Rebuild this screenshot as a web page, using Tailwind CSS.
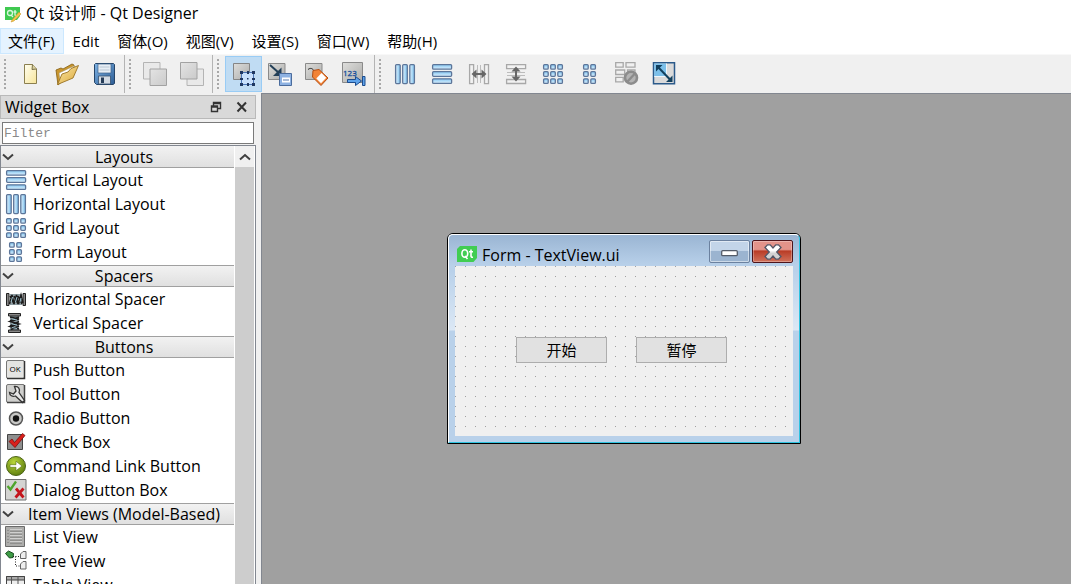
<!DOCTYPE html>
<html lang="zh-CN">
<head>
<meta charset="utf-8">
<title>Qt 设计师 - Qt Designer</title>
<script src="https://cdn.jsdelivr.net/npm/@tailwindcss/browser@4"></script>
</head>
<body class="flex h-screen flex-col overflow-hidden bg-[#f0f0f0] font-['Open_Sans','Noto_Sans_CJK_SC',sans-serif] text-base leading-6 text-black">

<svg class="absolute h-0 w-0" aria-hidden="true">
  <defs>
    <linearGradient id="blue" x1="0" y1="0" x2="0" y2="1"><stop offset="0" stop-color="#85c8f3"/><stop offset="1" stop-color="#dceffc"/></linearGradient>
    <linearGradient id="blueH" x1="0" y1="0" x2="1" y2="0"><stop offset="0" stop-color="#dceffc"/><stop offset="1" stop-color="#80c4f0"/></linearGradient>
    <linearGradient id="gray" x1="0" y1="0" x2="1" y2="1"><stop offset="0" stop-color="#dededc"/><stop offset="1" stop-color="#acacaa"/></linearGradient>
    <linearGradient id="pale" x1="0" y1="0" x2="1" y2="1"><stop offset="0" stop-color="#e4e4e4"/><stop offset="1" stop-color="#cacaca"/></linearGradient>
    <linearGradient id="paper" x1="0" y1="0" x2="1" y2="1"><stop offset="0" stop-color="#fffef0"/><stop offset="1" stop-color="#f7e59a"/></linearGradient>
    <linearGradient id="gold" x1="0" y1="0" x2="1" y2="1"><stop offset="0" stop-color="#fbe6a4"/><stop offset="1" stop-color="#dba93c"/></linearGradient>
    <linearGradient id="floppy" x1="0" y1="0" x2="1" y2="1"><stop offset="0" stop-color="#7fb4e6"/><stop offset="1" stop-color="#2c5c94"/></linearGradient>
    <radialGradient id="green" cx=".4" cy=".3" r=".8"><stop offset="0" stop-color="#b9d63a"/><stop offset="1" stop-color="#55750b"/></radialGradient>
    <linearGradient id="cross" x1="0" y1="0" x2="0" y2="1"><stop offset=".4" stop-color="#fff"/><stop offset=".6" stop-color="#d2d2d2"/></linearGradient>
  </defs>
  <symbol id="i-hlayout" viewBox="0 0 24 24"><g fill="url(#blueH)" stroke="#5c7599" stroke-width="1.3"><rect x="2.6" y="2.6" width="4.6" height="19" rx="1"/><rect x="9.7" y="2.6" width="4.6" height="19" rx="1"/><rect x="16.8" y="2.6" width="4.6" height="19" rx="1"/></g></symbol>
  <symbol id="i-vlayout" viewBox="0 0 24 24"><g fill="url(#blue)" stroke="#5c7599" stroke-width="1.3"><rect x="2.6" y="2.6" width="19" height="4.6" rx="1"/><rect x="2.6" y="9.7" width="19" height="4.6" rx="1"/><rect x="2.6" y="16.8" width="19" height="4.6" rx="1"/></g></symbol>
  <symbol id="i-grid" viewBox="0 0 24 24"><g fill="url(#blue)" stroke="#5c7599" stroke-width="1.3"><rect x="2.6" y="2.6" width="4.6" height="4.6" rx="1"/><rect x="9.7" y="2.6" width="4.6" height="4.6" rx="1"/><rect x="16.8" y="2.6" width="4.6" height="4.6" rx="1"/><rect x="2.6" y="9.7" width="4.6" height="4.6" rx="1"/><rect x="9.7" y="9.7" width="4.6" height="4.6" rx="1"/><rect x="16.8" y="9.7" width="4.6" height="4.6" rx="1"/><rect x="2.6" y="16.8" width="4.6" height="4.6" rx="1"/><rect x="9.7" y="16.8" width="4.6" height="4.6" rx="1"/><rect x="16.8" y="16.8" width="4.6" height="4.6" rx="1"/></g></symbol>
  <symbol id="i-form" viewBox="0 0 24 24"><g fill="url(#blue)" stroke="#5c7599" stroke-width="1.3"><rect x="5.6" y="2.6" width="4.6" height="4.6" rx="1"/><rect x="12.8" y="2.6" width="4.6" height="4.6" rx="1"/><rect x="5.6" y="9.7" width="4.6" height="4.6" rx="1"/><rect x="12.8" y="9.7" width="4.6" height="4.6" rx="1"/><rect x="5.6" y="16.8" width="4.6" height="4.6" rx="1"/><rect x="12.8" y="16.8" width="4.6" height="4.6" rx="1"/></g></symbol>
  <symbol id="i-chevron" viewBox="0 0 12 8"><path d="M1 1.5 6 6 11 1.5" fill="none" stroke="#404040" stroke-width="2"/></symbol>
</svg>

<header class="flex h-7 shrink-0 items-center gap-1 bg-white pl-1">
  <svg class="h-[18px] w-[18px]" viewBox="0 0 18 18"><path d="M1 2h15v9l-3 4H1z" fill="#3fc950"/><circle cx="6" cy="8" r="2.5" fill="none" stroke="#d8f6dc" stroke-width="1.3"/><path d="M7 10l2 2M11 5v5l1 1M9.5 7h3" fill="none" stroke="#d8f6dc" stroke-width="1.3"/><path d="m8 15 7-8 2 2-7 7-3 1z" fill="#f2c44c" stroke="#c49224" stroke-width=".5"/></svg>
  <h1 class="pb-[2px] leading-6">Qt 设计师 - Qt Designer</h1>
</header>

<nav class="flex h-[26px] shrink-0 bg-white text-[15px]" aria-label="菜单">
  <button class="border border-[#cce8ff] bg-[#e5f3ff] pr-2 pl-[7px] leading-6">文件(F)</button>
  <button class="px-[9px]">Edit</button>
  <button class="px-[9px]">窗体(O)</button>
  <button class="px-[9px]">视图(V)</button>
  <button class="px-[9px]">设置(S)</button>
  <button class="px-[9px]">窗口(W)</button>
  <button class="px-[9px]">帮助(H)</button>
</nav>

<div class="flex h-[39px] shrink-0 border-t border-[#f8f8f8]" role="toolbar" aria-label="工具栏">
  <div class="flex items-center border-r border-[#b4b4b4]">
    <div class="mx-1 h-[30px] w-1 bg-[radial-gradient(circle_at_1px_1px,#a8a8a8_1px,transparent_1px)] bg-size-[4px_4px]"></div>
    <button aria-label="新建" class="flex h-9 w-[37px] items-center pl-[6px]"><svg class="h-6 w-6" viewBox="0 0 24 24"><path d="M6.500 21.500V2.500h8l4 4.500v14.500z" fill="url(#paper)" stroke="#8b7f4e"/><path d="M14.500 2.500 14 7.500l4.500-.5" fill="#d8cf9e" stroke="#6d6541" stroke-width=".9"/></svg></button>
    <button aria-label="打开" class="flex h-9 w-[37px] items-center pl-[6px]"><svg class="h-6 w-6" viewBox="0 0 24 24"><path d="m1 8 5-2 2 1 9-5 2 1 0 6-16 14z" fill="#c9962e" stroke="#8d681c" stroke-width=".9"/><path d="m4 11 15-7 1 4L5 19z" fill="#fff" stroke="#a89562" stroke-width=".6"/><path d="M2.500 22.500 7 12l6-2 3-3.500 7.500-3L18 16z" fill="url(#gold)" stroke="#9a7324" stroke-width=".9"/></svg></button>
    <button aria-label="保存" class="flex h-9 w-[37px] items-center pl-[6px]"><svg class="h-6 w-6" viewBox="0 0 24 24"><path d="M3.500 1.500h18l1 1v19l-1.500 1H4.500l-2-2v-18z" fill="url(#floppy)" stroke="#264569"/><path d="M6 2h13v9H6z" fill="#e7eef5" stroke="#3d5f88" stroke-width=".7"/><path d="M7.500 5h10M7.500 8h10" stroke="#b8c6d4"/><path d="M6.500 14h12v8h-12z" fill="#d2dae3" stroke="#36506f" stroke-width=".8"/><path d="M9 15.500h3V21H9z" fill="#263c58"/></svg></button>
    <span class="w-px"></span>
  </div>
  <div class="flex items-center border-r border-[#b4b4b4]">
    <div class="mx-1 h-[30px] w-1 bg-[radial-gradient(circle_at_1px_1px,#a8a8a8_1px,transparent_1px)] bg-size-[4px_4px]"></div>
    <button aria-label="放到后面" class="flex h-9 w-[37px] items-center pl-[6px]"><svg class="h-6 w-6" viewBox="0 0 24 24"><path d="M.5.5h16.500v16.500H.5z" fill="#e9e9e9" stroke="#b4b4b4"/><path d="M7 7h16.500v16.500H7z" fill="url(#pale)" stroke="#a2a2a2"/></svg></button>
    <button aria-label="放到前面" class="flex h-9 w-[37px] items-center pl-[6px]"><svg class="h-6 w-6" viewBox="0 0 24 24"><path d="M7 7h16.500v16.500H7z" fill="#e9e9e9" stroke="#b4b4b4"/><path d="M.5.5h16.500v16.500H.5z" fill="url(#pale)" stroke="#a2a2a2"/></svg></button>
    <span class="w-px"></span>
  </div>
  <div class="flex items-center border-r border-[#b4b4b4]">
    <div class="mx-1 h-[30px] w-1 bg-[radial-gradient(circle_at_1px_1px,#a8a8a8_1px,transparent_1px)] bg-size-[4px_4px]"></div>
    <button aria-label="编辑窗口部件" aria-pressed="true" class="flex h-9 w-[37px] items-center border border-[#99ccf5] bg-[#c0dcf3] pl-[5px]"><svg class="h-6 w-6" viewBox="0 0 24 24"><path d="M2.500 1.500h16v16h-16z" fill="url(#gray)" stroke="#858585"/><path d="M10.500 10.500h12v12h-12z" fill="#c8e0fb" stroke="#4a74b4"/><path d="M9 9h3v3H9zM16 9h2v3h-2zM21 9h3v3h-3zM9 16h3v2H9zM21 16h3v2h-3zM9 21h3v3H9zM16 21h2v3h-2zM21 21h3v3h-3zM16 16h1.500v1.500H16z" fill="#1f3760"/></svg></button>
    <button aria-label="编辑信号/槽" class="flex h-9 w-[37px] items-center pl-[6px]"><svg class="h-6 w-6" viewBox="0 0 24 24"><path d="M.5 1.500h16.500v16H.5z" fill="url(#gray)" stroke="#8a8a8a"/><path d="m2 3 9 8" stroke="#233f57" stroke-width="2"/><path d="M13.500 5.500v8.500H5z" fill="#233f57"/><path d="M11.500 11.500h12v12h-12z" fill="#8eb2e2" stroke="#4b6c9d"/><path d="M14 15.500h8v5h-8z" fill="#fff"/><path d="M15 18h6" stroke="#5679ad"/></svg></button>
    <button aria-label="编辑伙伴" class="flex h-9 w-[37px] items-center pl-[6px]"><svg class="h-6 w-6" viewBox="0 0 24 24"><path d="M.5 1.500h16.500v16H.5z" fill="url(#gray)" stroke="#8a8a8a"/><path d="M3 7.500c3-2.500 6-.5 6 3" fill="none" stroke="#333"/><path d="M8 8.500 14 7.500l9 8.500-7 7.500-8.500-8.500z" fill="#f28336" stroke="#b34d12"/><path d="m16.500 11 4.700 4.800-5.200 5.500-4.700-4.800z" fill="#fff"/></svg></button>
    <button aria-label="编辑 Tab 顺序" class="flex h-9 w-[37px] items-center pl-[6px]"><svg class="h-6 w-6" viewBox="0 0 24 24"><path d="M.5.500h20v20H.5z" fill="url(#gray)" stroke="#8a8a8a"/><text x="1" y="14" font-family="Open Sans, sans-serif" font-size="8" fill="#174f9c" stroke="#174f9c" stroke-width=".3">123</text><path d="M5.500 17.500h8v-3l6 4.500-6 4.500v-3h-8zM20.500 14.500h2.500v9h-2.500z" fill="#5da2ea" stroke="#1d4c8d"/></svg></button>
    <span class="w-px"></span>
  </div>
  <div class="flex items-center">
    <div class="mx-1 h-[30px] w-1 bg-[radial-gradient(circle_at_1px_1px,#a8a8a8_1px,transparent_1px)] bg-size-[4px_4px]"></div>
    <button aria-label="水平布局" class="flex h-9 w-[37px] items-center pl-[6px]"><svg class="h-6 w-6"><use href="#i-hlayout"/></svg></button>
    <button aria-label="垂直布局" class="flex h-9 w-[37px] items-center pl-[6px]"><svg class="h-6 w-6"><use href="#i-vlayout"/></svg></button>
    <button aria-label="使用分裂器水平布局" class="flex h-9 w-[37px] items-center pl-[6px]"><svg class="h-6 w-6" viewBox="0 0 24 24"><g fill="#f2f2f2" stroke="#a8a8a8" stroke-width="1.300"><path d="M2.600 2.600h4v19h-4zM17.500 2.600h4v19h-4z"/></g><path d="M10.500 3v18M13.500 3v18" stroke="#bcbcbc" /><path d="M4.500 12 9.500 7.500v3.500h5V7.500l5 4.500-5 4.500V13h-5v3.500z" fill="#666"/></svg></button>
    <button aria-label="使用分裂器垂直布局" class="flex h-9 w-[37px] items-center pl-[6px]"><svg class="h-6 w-6" viewBox="0 0 24 24"><g fill="#f2f2f2" stroke="#a8a8a8" stroke-width="1.300"><path d="M2.600 2.600h19v4h-19zM2.600 17.500h19v4h-19z"/></g><path d="M3 10.500h18M3 13.500h18" stroke="#bcbcbc"/><path d="m12 4.500 4.500 5H13v5h3.500l-4.500 5-4.500-5H11v-5H7.500z" fill="#666"/></svg></button>
    <button aria-label="栅格布局" class="flex h-9 w-[37px] items-center pl-[6px]"><svg class="h-6 w-6"><use href="#i-grid"/></svg></button>
    <button aria-label="在窗体布局中布局" class="flex h-9 w-[37px] items-center pl-[6px]"><svg class="h-6 w-6"><use href="#i-form"/></svg></button>
    <button aria-label="打破布局" class="flex h-9 w-[37px] items-center pl-[6px]"><svg class="h-6 w-6" viewBox="0 0 24 24"><g fill="#f0f0f0" stroke="#a8a8a8" stroke-width="1.300"><path d="M.7.700h7.500v4.500H.7zM11 .700h9v4.500h-9zM.7 8h9v4.500h-9zM12.500 8h7.500v4.500h-7.500zM.7 15.300h7.500v4.500H.7z"/></g><circle cx="16" cy="15.700" r="6" fill="#b4b4b4" stroke="#8c8c8c" stroke-width="2.600"/><path d="m12.500 19.500 7-7.500" stroke="#8c8c8c" stroke-width="2.400"/></svg></button>
    <button aria-label="调整大小" class="flex h-9 w-[37px] items-center pl-[6px]"><svg class="h-6 w-6" viewBox="0 0 24 24"><path d="M1.500.800h21v21h-21z" fill="#dadada" stroke="#2b5a8a" stroke-width="1.500"/><path d="M2.200 1.500h12v13h-12z" fill="#7cc0ea"/><path d="M14.500 1.500v13H2.200" fill="none" stroke="#eef6fb"/><path d="m6 5 12 12.500" stroke="#12405e" stroke-width="2"/><path d="M4 3h6.500L4 9.500zM20.500 20H14l6.500-6.500z" fill="#12405e"/></svg></button>
  </div>
</div>

<div class="flex min-h-0 flex-1">
  <aside class="flex w-64 shrink-0 flex-col pt-[2px]">
    <div class="flex h-6 shrink-0 items-center border border-[#b9b9b9] bg-[#d9d9d9] pl-1">
      <h2 class="flex-1 leading-6">Widget Box</h2>
      <button aria-label="浮动" class="w-[26px]"><svg class="h-3 w-3" viewBox="0 0 12 12"><path d="M3.500 5V1.500h7v6H8M3.500 2.500h7M1.500 5h6v5.500h-6zM1.500 6h6" fill="none" stroke="#333" stroke-width="1.400"/></svg></button>
      <button aria-label="关闭" class="w-[19px]"><svg class="h-3 w-3" viewBox="0 0 12 12"><path d="m1.500 1.500 8.500 9M10 1.500l-8.500 9" stroke="#333" stroke-width="2"/></svg></button>
    </div>
    <div class="mx-[2px] mt-[3px] flex h-[22px] shrink-0">
      <input aria-label="Filter" placeholder="Filter" class="w-full border border-[#7a7a7a] bg-white px-px pt-[2px] font-['Liberation_Mono',monospace] text-[13px] leading-5 placeholder:text-[#8a8a8a]">
    </div>
    <div class="mt-px flex min-h-0 flex-1 overflow-hidden border border-b-0 border-[#828790] bg-white">
      <div class="min-w-0 flex-1">
        <button class="flex h-[22px] w-full items-center border-b border-[#a0a0a0] bg-linear-to-b from-[#f2f2f2] to-[#e0e0e0] pl-px"><svg class="h-2 w-3 shrink-0"><use href="#i-chevron"/></svg><span class="flex-1 pt-px leading-5">Layouts</span></button>
        <ul>
          <li class="flex h-6 items-center gap-[6px] pl-1"><svg class="h-[22px] w-[22px]" viewBox="1 1 22 22"><use href="#i-vlayout" width="24" height="24"/></svg>Vertical Layout</li>
          <li class="flex h-6 items-center gap-[6px] pl-1"><svg class="h-[22px] w-[22px]" viewBox="1 1 22 22"><use href="#i-hlayout" width="24" height="24"/></svg>Horizontal Layout</li>
          <li class="flex h-6 items-center gap-[6px] pl-1"><svg class="h-[22px] w-[22px]" viewBox="1 1 22 22"><use href="#i-grid" width="24" height="24"/></svg>Grid Layout</li>
          <li class="flex h-6 items-center gap-[6px] pl-1"><svg class="h-[22px] w-[22px]" viewBox="1 1 22 22"><use href="#i-form" width="24" height="24"/></svg>Form Layout</li>
        </ul>
        <button class="mt-px flex h-[22px] w-full items-center border-y border-[#a0a0a0] bg-linear-to-b from-[#f2f2f2] to-[#e0e0e0] pl-px"><svg class="h-2 w-3 shrink-0"><use href="#i-chevron"/></svg><span class="flex-1 leading-5">Spacers</span></button>
        <ul>
          <li class="flex h-6 items-center gap-[6px] pl-1"><svg class="h-[22px] w-[22px]" viewBox="0 0 22 22"><path d="M5 6h12v11H5z" fill="#8f9ea4"/><path d="M1.500 5.500h2.500v12H1.500zM18 5.500h2.500v12H18z" fill="#888" stroke="#222"/><path d="M4.500 16 7 7l2 9 2.500-9 2 9L16 7l2 8M5 8l4 8M9 8l4 8M13 8l4 8" fill="none" stroke="#1c1c1c" stroke-width="1.500"/><path d="m6 14 1.500-5M10.500 14 12 9M15 14l1-4" stroke="#9fc4d2"/></svg>Horizontal Spacer</li>
          <li class="flex h-6 items-center gap-[6px] pl-1"><svg class="h-[22px] w-[22px]" viewBox="0 0 22 22"><path d="M5 4h9v14H5z" fill="#8f9ea4"/><path d="M3.500 1.500h12V4h-12zM3.500 18h12v2.500h-12z" fill="#888" stroke="#222"/><path d="M5 5l9 2-9 2.500 9 2.500-9 2.500 9 2.500M14 5l-9 4M14 9.500 5 14M14 14l-8 3.500" fill="none" stroke="#1c1c1c" stroke-width="1.500"/><path d="m7 7 5 1M7 12l5 1M7 15.500l5 1" stroke="#9fc4d2"/></svg>Vertical Spacer</li>
        </ul>
        <button class="mt-px flex h-[22px] w-full items-center border-y border-[#a0a0a0] bg-linear-to-b from-[#f2f2f2] to-[#e0e0e0] pl-px"><svg class="h-2 w-3 shrink-0"><use href="#i-chevron"/></svg><span class="flex-1 leading-5">Buttons</span></button>
        <ul>
          <li class="flex h-6 items-center gap-[6px] pl-1"><svg class="h-[22px] w-[22px]" viewBox="0 0 22 22"><rect x="1.500" y="1.500" width="18" height="18" rx="1.500" fill="#e4e4e2" stroke="#777"/><path d="M2 19.500h17.500V2" fill="none" stroke="#333" stroke-width="1.500"/><text x="4.500" y="12.500" font-family="Open Sans, sans-serif" font-size="8">OK</text></svg>Push Button</li>
          <li class="flex h-6 items-center gap-[6px] pl-1"><svg class="h-[22px] w-[22px]" viewBox="0 0 22 22"><rect x="1.500" y="1.500" width="18" height="18" rx="1.500" fill="#cfcfcd" stroke="#777"/><path d="M2 19.500h17.500V2" fill="none" stroke="#444" stroke-width="1.500"/><path d="M9.500 3.500c4-.5 6 3 4.500 6l5.500 8-2 2-7-6.500c-3 1-6-.5-6-3.500l4 1.500 2.500-3z" fill="#e6e6e6" stroke="#333" stroke-width="1.300"/></svg>Tool Button</li>
          <li class="flex h-6 items-center gap-[6px] pl-1"><svg class="h-[22px] w-[22px]" viewBox="0 0 22 22"><circle cx="11" cy="11.500" r="6.500" fill="#c8c8c6" stroke="#555" stroke-width="1.500"/><circle cx="11" cy="11.500" r="3.200" fill="#111"/></svg>Radio Button</li>
          <li class="flex h-6 items-center gap-[6px] pl-1"><svg class="h-[22px] w-[22px]" viewBox="0 0 22 22"><path d="M2.500 3.500h15v15h-15z" fill="#8e8e8e" stroke="#444"/><path d="m4 10.500 3-2.500 2.500 3.500L17.500 2.500l2.500 2L10 16.500z" fill="#d9201c" stroke="#7b0d0b" stroke-width=".8"/></svg>Check Box</li>
          <li class="flex h-6 items-center gap-[6px] pl-1"><svg class="h-[22px] w-[22px]" viewBox="0 0 22 22"><circle cx="11" cy="11" r="9.500" fill="url(#green)" stroke="#4d6518"/><path d="M5 9.700h6V6.200l6 4.800-6 4.800v-3.500H5z" fill="#fff" stroke="#54700f" stroke-width=".6"/></svg>Command Link Button</li>
          <li class="flex h-6 items-center gap-[6px] pl-1"><svg class="h-[22px] w-[22px]" viewBox="0 0 22 22"><path d="M.5.500h20.500v20.500H.5z" fill="#d4d4d2" stroke="#707070"/><path d="m2.500 7 3 3.500 5.500-8" fill="none" stroke="#4fa52c" stroke-width="2.300"/><path d="m11 9.500 7.500 9M18.500 9.500l-8 9" stroke="#c4161c" stroke-width="2.800"/></svg>Dialog Button Box</li>
        </ul>
        <button class="mt-px flex h-[22px] w-full items-center border-y border-[#a0a0a0] bg-linear-to-b from-[#f2f2f2] to-[#e0e0e0] pl-px"><svg class="h-2 w-3 shrink-0"><use href="#i-chevron"/></svg><span class="flex-1 leading-5">Item Views (Model-Based)</span></button>
        <ul>
          <li class="flex h-6 items-center gap-[6px] pl-1"><svg class="h-[22px] w-[22px]" viewBox="0 0 22 22"><path d="M.5.500h19v20H.5z" fill="#adadab" stroke="#6a6a6a"/><path d="M5 4h12M5 7h12M5 10h12M5 13h12M5 16h12" stroke="#f2f2f2"/><path d="M5 5h12M5 8h12M5 11h12M5 14h12M5 17h12M2.500 4.500h1M2.500 7.500h1M2.500 10.500h1M2.500 13.500h1M2.500 16.500h1" stroke="#666" stroke-width=".8"/></svg>List View</li>
          <li class="flex h-6 items-center gap-[6px] pl-1"><svg class="h-[22px] w-[22px]" viewBox="0 0 22 22"><path d="m.5 3.500 3-2.500 5 2.500-.500 4-3.500.500z" fill="#3e9c46" stroke="#164d1d"/><path d="M8 6.500h7M10.500 6.500V16H15" fill="none" stroke="#222" stroke-dasharray="1 1.500"/><path d="M15.500 4 18 1.500h3v7h-5.500zM15.500 14l2.500-2.500h3v7.500h-5.500z" fill="#eee" stroke="#666"/></svg>Tree View</li>
          <li class="flex h-6 items-center gap-[6px] pl-1"><svg class="h-[22px] w-[22px]" viewBox="0 0 22 22"><path d="M1.500 2.500h18v17h-18z" fill="#eee" stroke="#444"/><path d="M1.500 2.500h18v3.500h-18z" fill="#aaa" stroke="#444"/><path d="M6.500 2.500v17M13 2.500v17M1.500 10.500h18M1.500 15h18" stroke="#555"/></svg>Table View</li>
        </ul>
      </div>
      <div class="mr-px ml-px w-[19px] bg-[#cdcdcd]">
        <button aria-label="向上滚动" class="flex h-[21px] w-full items-center justify-center bg-[#f0f0f0]"><svg class="h-2 w-3 rotate-180"><use href="#i-chevron"/></svg></button>
      </div>
    </div>
  </aside>

  <main class="relative ml-[5px] min-w-0 flex-1 border-t border-l border-[#828790] bg-[#a0a0a0]">
    <section aria-label="Form - TextView.ui" class="absolute top-[139px] left-[185px] flex h-[211px] w-[354px] flex-col rounded-t-md border border-black bg-[#b9d1ea]">
      <div class="flex flex-1 flex-col rounded-t-[5px] border border-t-white border-r-[#2fc3e0] border-b-[#2fc3e0] border-l-white bg-[linear-gradient(#9ab5d3,#b9d1ea_31px,#b9d1ea_36px,#dce8f5_95px,#b9d1ea_96px)] px-[6px] pb-[6px]">
        <div class="flex h-[31px] shrink-0 items-center">
          <svg class="mt-[6px] ml-[2px] h-4 w-5" viewBox="0 0 20 16"><path d="M3 0h17v12l-3.500 4H0V3z" fill="#41cd52"/><ellipse cx="7.800" cy="7.500" rx="2.900" ry="3.800" fill="none" stroke="#fff" stroke-width="1.600"/><path d="m8 10 2.500 3M14 3.500v6.500q0 1.500 2 1.200M12 5.800h4" fill="none" stroke="#fff" stroke-width="1.600"/></svg>
          <h2 class="flex-1 pt-2 pl-[5px] leading-5">Form - TextView.ui</h2>
          <button aria-label="最小化" class="mt-[2px] flex h-[23px] w-[41px] items-center justify-center rounded-xs border border-[#6b819f] bg-linear-to-b from-[#c3d5e9] from-45% to-[#9bb4d0] to-50% inset-ring inset-ring-white/50"><svg class="mt-[3px] h-[7px] w-[17px]" viewBox="0 0 17 7"><rect x=".7" y=".7" width="15.600" height="5" rx="1" fill="#fff" stroke="#545c69" stroke-width="1.300"/></svg></button>
          <button aria-label="关闭窗体" class="mt-[2px] ml-[2px] flex h-[23px] w-[41px] items-center justify-center rounded-xs border border-[#4d141b] bg-linear-to-b from-[#e3938a] from-40% via-[#b93c26] via-48% to-[#d0705a] inset-ring inset-ring-white/30"><svg class="h-4 w-[18px]" viewBox="0 0 18 16"><path d="M1 3.500 3.500.800h2.700L9 4l2.800-3.200h2.700L17 3.500 12.700 8l4.300 4.500-2.500 2.700h-2.700L9 12l-2.800 3.200H3.500L1 12.500 5.300 8z" fill="url(#cross)" stroke="#535666" stroke-width="1.300"/></svg></button>
        </div>
        <div class="relative flex-1 bg-[#f0f0f0] bg-[conic-gradient(from_270deg_at_1px_1px,#a0a0a0_90deg,transparent_90deg)] bg-size-[10px_10px]">
          <button class="absolute top-[71px] left-[61px] h-[26px] w-[91px] border border-[#adadad] bg-[#e1e1e1] text-[15px] leading-6">开始</button>
          <button class="absolute top-[71px] left-[181px] h-[26px] w-[91px] border border-[#adadad] bg-[#e1e1e1] text-[15px] leading-6">暂停</button>
        </div>
      </div>
    </section>
  </main>
</div>
</body>
</html>
